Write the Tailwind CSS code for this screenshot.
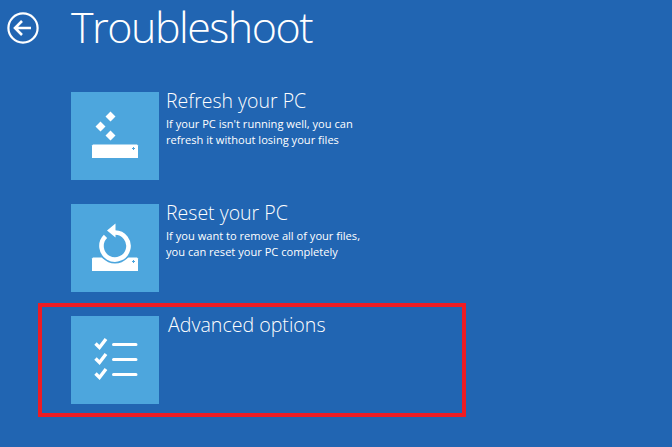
<!DOCTYPE html>
<html lang="en">
<head>
    <meta charset="UTF-8">
    <title>Troubleshoot</title>
    <script src="https://cdn.jsdelivr.net/npm/@tailwindcss/browser@4"></script>
</head>
<body class="bg-[#2165b2] text-white font-['Open_Sans',sans-serif] overflow-hidden">
    <div class="relative w-[672px] h-[447px]">
        <!-- Header -->
        <div class="flex items-center h-[56px] pl-[7px]">
            <svg class="w-[32px] h-[32px] mr-[32px]" viewBox="0 0 32 32" fill="none" stroke="white">
                <circle cx="16" cy="16" r="14.6" stroke-width="2.2"/>
                <path d="M8 16H24M15 9L8 16L15 23" stroke-width="2.6"/>
            </svg>
            <h1 class="text-[43px] leading-[50px] font-light tracking-[-1.5px] mb-[2px]">Troubleshoot</h1>
        </div>

        <!-- Options -->
        <div class="flex flex-col gap-[24px] pl-[71px] pt-[36px]">
            <div class="flex">
                <div class="w-[88px] h-[88px] bg-[#4da6dd]">
                    <svg class="w-[88px] h-[88px]" viewBox="0 0 88 88" fill="white">
                        <path d="M39.500 19.500L44.500 24.500L39.500 29.500L34.500 24.500ZM29.500 29.500L34.500 34.500L29.500 39.500L24.500 34.500ZM39.500 38.500L44.500 43.500L39.500 48.500L34.500 43.500Z"/>
                        <path d="M22 52.500H66L67 53.500V66H21V53.500Z"/>
                        <path d="M61 56.500H64M62.500 55V58" stroke="#4da6dd" stroke-width="1"/>
                    </svg>
                </div>
                <div class="pl-[7px]">
                    <div class="text-[19.500px] leading-[22px] font-light mt-[-2px]">Refresh your PC</div>
                    <p class="text-[11.100px] leading-[16px] mt-[4px]">If your PC isn't running well, you can<br>refresh it without losing your files</p>
                </div>
            </div>

            <div class="flex">
                <div class="w-[88px] h-[88px] bg-[#4da6dd]">
                    <svg class="w-[88px] h-[88px]" viewBox="0 0 88 88" fill="none">
                        <path d="M22 53.500H66L67 54.500V67H21V54.500Z" fill="white"/>
                        <path d="M61 57.500H64M62.500 56V59" stroke="#4da6dd" stroke-width="1"/>
                        <circle cx="44" cy="42" r="17.500" fill="#4da6dd"/>
                        <path d="M44 28.500A13.500 13.500 0 1 1 34.500 32.400" stroke="white" stroke-width="4.600"/>
                        <path d="M36 26.500L44.500 19.500V33.500Z" fill="white"/>
                    </svg>
                </div>
                <div class="pl-[7px]">
                    <div class="text-[19.500px] leading-[22px] font-light mt-[-2px]">Reset your PC</div>
                    <p class="text-[11.100px] leading-[16px] mt-[4px]">If you want to remove all of your files,<br>you can reset your PC completely</p>
                </div>
            </div>

            <div class="flex">
                <div class="w-[88px] h-[88px] bg-[#4da6dd]">
                    <svg class="w-[88px] h-[88px]" viewBox="0 0 88 88" fill="none" stroke="white">
                        <path d="M24.500 27.500L28.500 31.500L35 23M24.500 42.500L28.500 46.500L35 38M24.500 57.500L28.500 61.500L35 53" stroke-width="3.400"/>
                        <path d="M42.500 28.500H65M42.500 43.500H65M42.500 58.500H65" stroke-width="3" stroke-linecap="round"/>
                    </svg>
                </div>
                <div class="pl-[9px]">
                    <div class="text-[19.600px] leading-[22px] font-light mt-[-2px]">Advanced options</div>
                </div>
            </div>
        </div>

        <!-- Highlight box drawn over the screenshot -->
        <div class="absolute left-[37.500px] top-[303px] w-[428.500px] h-[114px] border-[4.500px] border-[#ed1c24]"></div>
    </div>
</body>
</html>
